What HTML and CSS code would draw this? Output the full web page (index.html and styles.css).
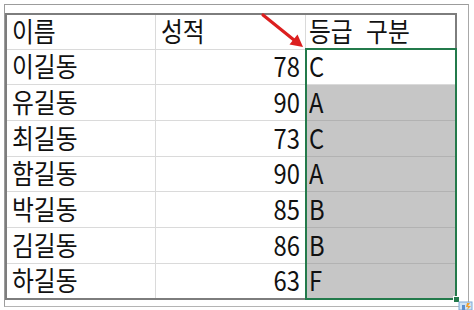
FILE: index.html
```html
<!DOCTYPE html>
<html lang="ko">
<head>
    <meta charset="UTF-8">
    <meta name="viewport" content="width=device-width, initial-scale=1.0">
    <title>성적 등급</title>
    <link rel="stylesheet" href="styles.css">
</head>
<body>
    <div class="sheet">
        <div class="frame">
            <div class="top-row"></div>
            <div class="grid">
                <div class="cell"><span class="txt">이름</span></div>
                <div class="cell"><span class="txt">성적</span></div>
                <div class="cell last-col"><span class="txt">등급&nbsp;&nbsp;구분</span></div>

                <div class="cell"><span class="txt">이길동</span></div>
                <div class="cell num"><span class="txt">78</span></div>
                <div class="cell last-col"><span class="txt">C</span></div>

                <div class="cell"><span class="txt">유길동</span></div>
                <div class="cell num"><span class="txt">90</span></div>
                <div class="cell last-col filled"><span class="txt">A</span></div>

                <div class="cell"><span class="txt">최길동</span></div>
                <div class="cell num"><span class="txt">73</span></div>
                <div class="cell last-col filled"><span class="txt">C</span></div>

                <div class="cell"><span class="txt">함길동</span></div>
                <div class="cell num"><span class="txt">90</span></div>
                <div class="cell last-col filled"><span class="txt">A</span></div>

                <div class="cell"><span class="txt">박길동</span></div>
                <div class="cell num"><span class="txt">85</span></div>
                <div class="cell last-col filled"><span class="txt">B</span></div>

                <div class="cell"><span class="txt">김길동</span></div>
                <div class="cell num"><span class="txt">86</span></div>
                <div class="cell last-col filled"><span class="txt">B</span></div>

                <div class="cell last-row"><span class="txt">하길동</span></div>
                <div class="cell num last-row"><span class="txt">63</span></div>
                <div class="cell last-col last-row filled"><span class="txt">F</span></div>

                <!-- selected range C2:C8, drawn over the cells -->
                <div class="selection"><span class="handle"></span></div>
            </div>
        </div>

        <!-- red pointer to the grade column -->
        <svg class="arrow" width="60" height="50" viewBox="0 0 60 50">
            <line x1="3" y1="3" x2="34" y2="28" stroke="#dc1f1f" stroke-width="3.2" stroke-linecap="round"/>
            <polygon points="43,35 29.5,32.5 37.5,22.5" fill="#dc1f1f"/>
        </svg>

        <!-- quick analysis button, cut off at the edge -->
        <svg class="quick" width="16" height="10" viewBox="0 0 16 10">
            <rect x="1" y="2" width="13" height="8" fill="#cfe3f5" stroke="#7fa9d6" stroke-width="1"/>
            <rect x="4" y="5" width="3" height="5" fill="#5b8fcf"/>
            <path d="M9 3 L12 3 L10 6 L13 6 L9 10 L10 7 L8 7 Z" fill="#f0a030"/>
        </svg>
    </div>
</body>
</html>
```

FILE: styles.css
```css
* {
    box-sizing: border-box;
}

body {
    margin: 0;
    background: #ffffff;
    font-family: "Noto Sans CJK KR", "Noto Sans", sans-serif;
    color: #111111;
}

.sheet {
    position: relative;
    width: 474px;
    height: 310px;
    overflow: hidden;
    padding: 4px 0 0 4px;
}

.frame {
    width: 465px;
    height: 303px;
    border: 1px solid #9c9c9c;
    border-right-color: #a8a8a8;
    border-bottom-color: #b4b4b4;
}

.top-row {
    height: 8px;
}

.grid {
    position: relative;
    display: grid;
    grid-template-columns: 149px 150px 149px;
    grid-template-rows: 35px 35px 36px 36px 35px 36px 36px 34px;
    width: 452px;
    border: 2px solid #7d7d7d;
    background: #ffffff;
}

.cell {
    display: flex;
    align-items: center;
    padding: 0 4px 3px 5px;
    border-right: 1px solid #dadada;
    border-bottom: 1px solid #dadada;
    font-size: 27px;
    white-space: nowrap;
}

.cell .txt {
    display: inline-block;
    line-height: 1;
    transform: scaleX(0.88);
    transform-origin: left center;
}

.cell.num {
    justify-content: flex-end;
    padding-right: 5px;
}

.cell.num .txt {
    transform-origin: right center;
}

.cell.last-col {
    border-right: none;
    padding-left: 3px;
}

.cell.last-row {
    border-bottom: none;
}

.cell.filled {
    background: #c6c6c6;
    border-bottom-color: #b2b2b2;
}

.cell.filled.last-row {
    border-bottom: none;
}

/* absolutely placed grid item: its box is the C2:C8 area */
.selection {
    position: absolute;
    grid-column: 3;
    grid-row: 2 / 9;
    top: -2px;
    left: -1px;
    right: -2px;
    bottom: -2px;
    border: 2px solid #237a4b;
    pointer-events: none;
}

.handle {
    position: absolute;
    right: -5px;
    bottom: -5px;
    width: 7px;
    height: 7px;
    background: #237a4b;
    border: 1px solid #ffffff;
}

.arrow {
    position: absolute;
    left: 260px;
    top: 12px;
}

.quick {
    position: absolute;
    left: 458px;
    top: 300px;
}
```
